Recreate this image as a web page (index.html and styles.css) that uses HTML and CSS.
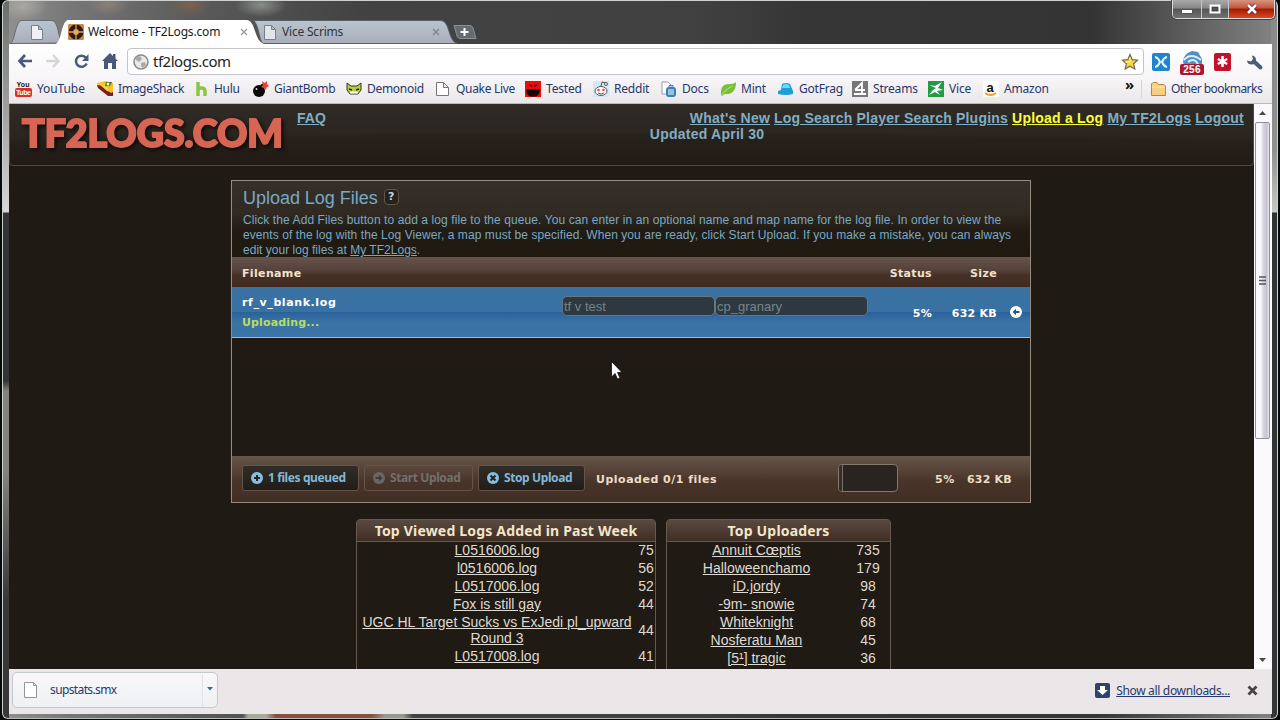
FILE: index.html
```html
<!DOCTYPE html>
<html lang="en">
<head>
<meta charset="utf-8">
<title>Welcome - TF2Logs.com</title>
<link rel="stylesheet" href="styles.css">
</head>
<body>
<div class="window">
  <header class="tabstrip">
    <svg class="tabshapes" width="1280" height="44" viewBox="0 0 1280 44">
      <defs><linearGradient id="tabg" x2="0" y2="1"><stop offset="0" stop-color="#bac4ce"/><stop offset="1" stop-color="#a9aeb9"/></linearGradient></defs>
      <path d="M10 43.500C15 42 15 23 21 20.500H52Q56 21 58 30L61 43Z" fill="url(#tabg)" stroke="#666e78"/>
      <path d="M253 20.500H441C450 21 448 41 457 43.500H263C259 42 259 23 253 20.500Z" fill="url(#tabg)" stroke="#59616b"/>
      <path d="M56 44C62 40 61 22 68 20H247C256 21 254 41 264 44Z" fill="#fff"/>
      <path d="M454 25.500H470Q472 25.500 473 28L476 38.500H460Q458 38.500 457 36Z" fill="#666b70" stroke="#8c9092"/>
      <path d="M464.500 28V36M460.500 32H468.500" stroke="#fff" stroke-width="2"/>
    </svg>
    <div class="tab pinned"><svg width="12" height="15" viewBox="0 0 12 15"><path d="M.5 .5H7.500L11.500 4.500V14.500H.5ZM7.500 .5V4.500H11.500" fill="#eef0f3" stroke="#777f88"/></svg></div>
    <div class="tab active">
      <svg width="16" height="16" viewBox="0 0 16 16"><rect width="16" height="16" rx="1" fill="#c98d49"/><circle cx="8" cy="8" r="5.200" fill="none" stroke="#2d1c14" stroke-width="4.400"/><path d="M8 0V16M0 8H16" stroke="#df9c50" stroke-width="1.300"/><circle cx="8" cy="8" r="2.200" fill="#e9ad63"/></svg>
      <span class="tabtitle t-active">Welcome - TF2Logs.com</span><svg class="x" width="8" height="8"><path d="M1 1L7 7M7 1L1 7" stroke="#999" stroke-width="1.400"/></svg>
    </div>
    <div class="tab vice">
      <svg width="12" height="15" viewBox="0 0 12 15"><path d="M.5 .5H7.500L11.500 4.500V14.500H.5ZM7.500 .5V4.500H11.500" fill="#e2e5e9" stroke="#777f88"/></svg>
      <span class="tabtitle t-vice">Vice Scrims</span><svg class="x" width="8" height="8"><path d="M1 1L7 7M7 1L1 7" stroke="#7e858c" stroke-width="1.400"/></svg>
    </div>
    <div class="controls">
      <span class="wc min"><svg width="12" height="5"><rect x=".5" y=".5" width="11" height="4" fill="#fff" stroke="#555"/></svg></span>
      <span class="wc max"><svg width="12" height="10"><rect x="1.500" y="1.500" width="9" height="7" fill="none" stroke="#fff" stroke-width="2"/><rect x="3.500" y="3.500" width="5" height="3" fill="#555" stroke="#444"/></svg></span>
      <span class="wc close"><svg width="12" height="10" viewBox="0 0 12 10"><path d="M2 1L10 9M10 1L2 9" stroke="#613" stroke-width="4"/><path d="M2 1L10 9M10 1L2 9" stroke="#fff" stroke-width="2.600"/></svg></span>
    </div>
  </header>

  <div class="toolbar">
    <div class="tools">
      <svg width="14" height="14" viewBox="0 0 14 14"><path d="M7 1L1.500 7L7 13M2 7H14" fill="none" stroke="#48587b" stroke-width="2.700"/></svg>
      <svg width="14" height="14" viewBox="0 0 14 14"><path d="M7 1L12.500 7L7 13M12 7H0" fill="none" stroke="#d3d5d9" stroke-width="2.500"/></svg>
      <svg width="15" height="15" viewBox="0 0 15 15"><path d="M12 3.800A5.600 5.600 0 1 0 12.700 9.500" fill="none" stroke="#4c5b77" stroke-width="2.500"/><path d="M14.500 0V7H8Z" fill="#4c5b77"/></svg>
      <svg width="16" height="16" viewBox="0 0 16 16"><path d="M8 0L0 8H2V16H6V10H10V16H14V8H16L13.500 5.500V1H11V3Z" fill="#48587b"/></svg>
    </div>
    <div class="omnibox">
      <svg width="16" height="16" viewBox="0 0 16 16"><circle cx="8" cy="8" r="7" fill="#e9e9e9" stroke="#8c8c8c" stroke-width="1.600"/><path d="M3 3L7 2L9 5L6 8L3 6ZM8 9L12 8L13 11L10 14L8 12Z" fill="#aaa"/></svg>
      <span class="url">tf2logs.com</span>
      <svg class="star" width="18" height="18" viewBox="0 0 18 18"><path d="M9 1.500L11.200 6.700L16.500 7.200L12.600 10.800L13.800 16L9 13.300L4.200 16L5.400 10.800L1.500 7.200L6.800 6.700Z" fill="#f7d447" stroke="#766a3e" stroke-width="1.200"/><path d="M9 4V9H4" stroke="#fff09b" fill="none"/></svg>
    </div>
    <svg class="ext e1" width="18" height="18" viewBox="0 0 18 18"><rect width="18" height="18" rx="2" fill="#2283d0"/><path d="M3 4Q6 4.500 8 9Q6 13.500 3 14M15 4Q12 4.500 10 9Q12 13.500 15 14" fill="none" stroke="#e7f8ff" stroke-width="2"/></svg>
    <span class="ext e2"><svg width="23" height="15" viewBox="0 0 23 15"><path d="M2 11Q2 3 11 0L17 1L21 8V14H3Z" fill="#4f8fc6"/><path d="M3 9Q10 1 20 9M7 11Q13 6 17 13" fill="none" stroke="#dceef9" stroke-width="2"/></svg><b>256</b></span>
    <svg class="ext e3" width="18" height="18" viewBox="0 0 18 18"><rect width="17" height="18" rx="2" fill="#c3102b"/><path d="M8.500 3V14M3.800 6L13.200 11M13.200 6L3.800 11" stroke="#fff" stroke-width="2.500"/></svg>
    <svg class="ext e4" width="17" height="16" viewBox="0 0 17 16"><path d="M6 1.500A4.500 4.500 0 1 1 1 6.500L5 7.500L7 5Z" fill="#4d5b76"/><path d="M8 7.500L14.500 13.500" stroke="#4d5b76" stroke-width="4" stroke-linecap="round"/></svg>
  </div>

  <nav class="bookmarks">
    <span class="bm"><svg width="17" height="16" viewBox="0 0 17 16"><rect y="7" width="17" height="9" rx="2" fill="#d92e2c"/><text x="1.500" y="6" font-size="7" font-weight="bold" textLength="13">You</text><text x="1" y="14" font-size="7" font-weight="bold" fill="#fff" textLength="15">Tube</text></svg><span>YouTube</span></span>
    <span class="bm"><svg width="17" height="16" viewBox="0 0 17 16"><path d="M0 2L9 0L16 2V12L14 15L10 13L1 7Z" fill="#f5c51b"/><path d="M0 4L7 5L14 12L16 11V15H11L1 7Z" fill="#7c1c2c"/><path d="M2 3L8 4L14 11L10 10Z" fill="#f9d92e"/><path d="M9 1L15 1L13 5H8Z" fill="#4e6b26"/><circle cx="11" cy="3" r="1.500" fill="#fff"/></svg><span>ImageShack</span></span>
    <span class="bm"><svg width="15" height="16" viewBox="0 0 15 16"><path d="M3 1V15M3 9Q3 7 6 7Q10 7 10 10V15" fill="none" stroke="#8bc644" stroke-width="3.500"/></svg><span>Hulu</span></span>
    <span class="bm"><svg width="16" height="16" viewBox="0 0 16 16"><circle cx="6" cy="10" r="6" fill="#080808"/><path d="M7 4L11 2L11 7Z" fill="#111"/><path d="M9 0L11.500 2L14 0L14 3L16 5L13.500 6.500L13 9L11 7L8 6L10 4Z" fill="#e84532"/><circle cx="3.500" cy="8" r="1" fill="#ddd"/></svg><span>GiantBomb</span></span>
    <span class="bm"><svg width="16" height="16" viewBox="0 0 16 16"><path d="M1 2L5 5H11L15 2V9L12 13H4L1 9Z" fill="#bacd42" stroke="#34371f"/><path d="M3 8L6 9M13 8L10 9" stroke="#222" stroke-width="1.500"/><path d="M4 11.500H12" stroke="#fff" stroke-width="2"/></svg><span>Demonoid</span></span>
    <span class="bm quake"><svg width="13" height="14" viewBox="0 0 13 14"><path d="M.5 .5H7.500L12.500 5.500V13.500H.5ZM7.500 .5V5.500H12.500" fill="#fff" stroke="#777"/></svg><span>Quake Live</span></span>
    <span class="bm"><svg width="16" height="16" viewBox="0 0 16 16"><rect width="16" height="16" fill="#ee0c0b"/><path d="M2 9H14Q14 15 8 15Q2 15 2 9M4 4L7 5M12 4L9 5" fill="#150706" stroke="#150706" stroke-width="1.500"/></svg><span>Tested</span></span>
    <span class="bm"><svg width="16" height="16" viewBox="0 0 16 16"><rect width="16" height="16" fill="#d2e7f7"/><ellipse cx="8" cy="10" rx="6" ry="4.500" fill="#fff" stroke="#555"/><circle cx="5.500" cy="9" r="1.300" fill="#f44"/><circle cx="10.500" cy="9" r="1.300" fill="#f44"/><path d="M5 12Q8 14 11 12M8 5L9 1L13 2" fill="none" stroke="#555"/><circle cx="13" cy="3" r="1.500" fill="#fff" stroke="#555"/></svg><span>Reddit</span></span>
    <span class="bm"><svg width="16" height="16" viewBox="0 0 16 16"><path d="M1 1H7L10 4V13H1Z" fill="#fff" stroke="#99b"/><rect x="5" y="6" width="10" height="10" rx="3" fill="#3581b4"/><path d="M8 6V4.500H12V6" fill="none" stroke="#3581b4"/><path d="M7 9H13M7 11H13M7 13H13" stroke="#fff"/></svg><span>Docs</span></span>
    <span class="bm"><svg width="16" height="16" viewBox="0 0 16 16"><path d="M1 14Q0 3 9 3Q14 3 16 1Q16 14 5 13L2 15Z" fill="#78bf37"/><path d="M2 14Q7 7 13 5" fill="none" stroke="#a2d86b" stroke-width="1.300"/></svg><span>Mint</span></span>
    <span class="bm"><svg width="16" height="14" viewBox="0 0 16 14"><path d="M0 12V9L3 8L4 2Q8 0 12 2L15 9V12Q8 14 0 12Z" fill="#1f9ed8"/><path d="M5 3Q8 1 11 3L12 6H4Z" fill="#69d9fa"/></svg><span>GotFrag</span></span>
    <span class="bm"><svg width="16" height="16" viewBox="0 0 16 16"><rect width="16" height="16" fill="#777"/><path d="M3 9L10 2V12M3 9H13M2 13H14" fill="none" stroke="#fff" stroke-width="1.800"/></svg><span>Streams</span></span>
    <span class="bm"><svg width="16" height="16" viewBox="0 0 16 16"><rect width="16" height="16" fill="#239b44"/><path d="M1 4L7 5L14 1L10 7L15 9L9 10L12 14L7 11L1 14L5 9L8 7Z" fill="#fff"/></svg><span>Vice</span></span>
    <span class="bm"><svg width="16" height="16" viewBox="0 0 16 16"><rect width="16" height="16" fill="#fffdf8"/><text x="3.500" y="11" font-size="13" font-weight="bold">a</text><path d="M2 12Q8 16 13 12" fill="none" stroke="#eba02b" stroke-width="1.800"/></svg><span>Amazon</span></span>
    <b class="more">»</b>
    <span class="bm other"><svg width="15" height="14" viewBox="0 0 15 14"><path d="M.5 13.500V2L2 .5H6L7.500 2.500H13L14.500 4V13.500Z" fill="#f8cf80" stroke="#bd8737"/><path d="M1 5H14" stroke="#ffe9ac"/></svg><span>Other bookmarks</span></span>
  </nav>

  <div class="viewport">
    <main class="page">
      <header class="sitehead">
        <svg class="logo" width="276" height="48" viewBox="0 0 276 48"><text x="7" y="36" textLength="261" lengthAdjust="spacingAndGlyphs">TF2LOGS.COM</text></svg>
        <a class="faq">FAQ</a>
        <div class="headtext">
          <div class="links"><a>What's New</a><a>Log Search</a><a>Player Search</a><a>Plugins</a><a class="current">Upload a Log</a><a>My TF2Logs</a><a>Logout</a></div>
          <div class="updated">Updated April 30</div>
        </div>
      </header>

      <section class="uploader">
        <div class="intro">
          <div class="title"><h1>Upload Log Files</h1><span class="help">?</span></div>
          <p><span class="l1">Click the Add Files button to add a log file to the queue. You can enter in an optional name and map name for the log file. In order to view the</span><br><span class="l2">events of the log with the Log Viewer, a map must be specified. When you are ready, click Start Upload. If you make a mistake, you can always</span><br><span class="l3">edit your log files at <a>My TF2Logs</a>.</span></p>
        </div>
        <div class="row colhead"><span>Filename</span><span></span><span class="num">Status</span><span class="num">Size</span></div>
        <div class="row file">
          <div class="fname"><div>rf_v_blank.log</div><div class="state">Uploading...</div></div>
          <div class="fields"><span>tf v test</span><span>cp_granary</span></div>
          <span class="num">5%</span><span class="num">632 KB</span>
          <svg width="12" height="12" viewBox="0 0 12 12"><circle cx="6" cy="6" r="6" fill="#fff"/><path d="M2.500 6L6 2.800V5H9.500V7H6V9.200Z" fill="#235889"/></svg>
        </div>
        <div class="blank"></div>
        <div class="foot">
          <span class="btn b1"><svg width="12" height="12" viewBox="0 0 12 12"><circle cx="6" cy="6" r="6" fill="#88bddd"/><path d="M6 3V9M3 6H9" stroke="#26231e" stroke-width="2"/></svg>1 files queued</span>
          <span class="btn b2"><svg width="12" height="12" viewBox="0 0 12 12"><circle cx="6" cy="6" r="6" fill="#696765"/><path d="M9.500 6L6 2.800V5H2.500V7H6V9.200Z" fill="#47372e"/></svg>Start Upload</span>
          <span class="btn b3"><svg width="12" height="12" viewBox="0 0 12 12"><circle cx="6" cy="6" r="6" fill="#88bddd"/><path d="M3.500 3.500L8.500 8.500M8.500 3.500L3.500 8.500" stroke="#26231e" stroke-width="2"/></svg>Stop Upload</span>
          <span class="count">Uploaded 0/1 files</span>
          <span class="progress"><i></i></span>
          <span class="pct">5%</span><span class="size">632 KB</span>
        </div>
      </section>

      <div class="lists">
        <section class="list viewed">
          <h2>Top Viewed Logs Added in Past Week</h2>
          <div class="item"><a>L0516006.log</a><span>75</span></div>
          <div class="item"><a>l0516006.log</a><span>56</span></div>
          <div class="item"><a>L0517006.log</a><span>52</span></div>
          <div class="item"><a>Fox is still gay</a><span>44</span></div>
          <div class="item"><a>UGC HL Target Sucks vs ExJedi pl_upward<br>Round 3</a><span>44</span></div>
          <div class="item"><a>L0517008.log</a><span>41</span></div>
        </section>
        <section class="list top">
          <h2>Top Uploaders</h2>
          <div class="item"><a>Annuit Cœptis</a><span>735</span></div>
          <div class="item"><a>Halloweenchamo</a><span>179</span></div>
          <div class="item"><a>iD.jordy</a><span>98</span></div>
          <div class="item"><a>-9m- snowie</a><span>74</span></div>
          <div class="item"><a>Whiteknight</a><span>68</span></div>
          <div class="item"><a>Nosferatu Man</a><span>45</span></div>
          <div class="item"><a>[5¹] tragic</a><span>36</span></div>
        </section>
      </div>
    </main>
    <div class="scrollbar">
      <svg width="7" height="4"><path d="M0 4L3.500 0L7 4Z" fill="#4a4a4a"/></svg>
      <div class="thumb"><svg width="7" height="9"><path d="M0 1H7M0 4.500H7M0 8H7" stroke="#55555e" stroke-width="1.500"/></svg></div>
      <svg class="down" width="7" height="4"><path d="M0 0L3.500 4L7 0Z" fill="#4a4a4a"/></svg>
    </div>
  </div>

  <footer class="shelf">
    <div class="download"><svg width="13" height="16" viewBox="0 0 13 16"><path d="M.5 .5H9.500L12.500 3.500V15.500H.5ZM9.500 .5V3.500H12.500" fill="#fff" stroke="#92979b"/></svg><span>supstats.smx</span><i><svg width="6" height="4"><path d="M0 0H6L3 3.500Z" fill="#45658f"/></svg></i></div>
    <svg class="dlicon" width="15" height="15" viewBox="0 0 15 15"><rect width="15" height="15" rx="2" fill="#2c426f"/><path d="M5 3H10V7H13L7.500 12L2 7H5Z" fill="#fff"/></svg>
    <a>Show all downloads...</a>
    <svg class="shelfx" width="11" height="11" viewBox="0 0 11 11"><path d="M1.500 1.500L9.500 9.500M9.500 1.500L1.500 9.500" stroke="#444" stroke-width="2.800"/></svg>
  </footer>
</div>
<svg class="cursor" width="12" height="19" viewBox="0 0 12 19"><path d="M.5 .5V16L4 12.500L6.500 18L9 17L6.500 11.500H11Z" fill="#fff" stroke="#111" stroke-width=".8"/></svg>
</body>
</html>
```
FILE: styles.css
```css
* { box-sizing: border-box; }
svg { display: block; flex: none; overflow: visible; }
body { margin: 0; width: 1280px; height: 720px; overflow: hidden; background: #080909; font-family: "Liberation Sans", Arial, sans-serif; }
.window {
  width: 1276px; height: 719px; margin-left: 2px; padding: 0 5px 5px 6px;
  border: 1px solid #cdd2d1; border-bottom-color: #bbb; border-radius: 6px;
  display: flex; flex-direction: column;
  background:
    linear-gradient(90deg, transparent 240px, #aaa99e 245px 263px, #884f3d 273px 368px, #99998e 382px 400px, transparent 410px) bottom/100% 6px no-repeat,
    linear-gradient(#6b6d6c 0, #aaa 130px, #d7d7d7 211px, #323438 212px 380px, #85837d 390px 470px, #383838 600px) left 0 top 0/6px 100% no-repeat,
    linear-gradient(#898989 0, #8e918f 150px, #c6c8c5 211px, #303434 212px, #343636 100%) right 0 top 0/6px 100% no-repeat,
    radial-gradient(ellipse at 20px 5px, #aaa8a3 0, transparent 25px),
    radial-gradient(ellipse 22px 12px at 105px 3px, #898178 0, transparent),
    radial-gradient(ellipse 22px 12px at 187px 3px, #7a614d 0, transparent),
    radial-gradient(ellipse 26px 12px at 258px 4px, #8a8d89 0, transparent),
    linear-gradient(90deg, #929291 0, #777 65px, #595959 200px, #424242 360px, #414141 690px, #363636 800px, #343434 1090px, #4e4e4e 1150px, #848484 1276px);
}
.tabstrip { height: 43px; flex: none; display: flex; align-items: flex-start; padding-top: 19px; margin: 0 0 0 -9px; color: #30343a; font: 12px "Noto Sans", sans-serif; }
.tabshapes { position: absolute; left: 0; top: 0; }
.tab { position: relative; display: flex; align-items: center; height: 24px; }
.pinned { width: 37px; margin-left: 31px; }
.active { width: 196px; }
.tabtitle { margin: -2px 0 0 4px; white-space: nowrap; }
.t-active { width: 152px; color: #181818; letter-spacing: -.17px; }
.vice { width: 180px; }
.t-vice { margin-left: 6px; width: 150px; letter-spacing: -.2px; }
.controls { position: absolute; left: 1172px; top: 0; display: flex; height: 19px; width: 103px; border: 1px solid #ddd; border-top: 0; border-radius: 0 0 5px 5px; overflow: hidden; box-shadow: 0 0 0 1px #444; }
.wc { display: flex; align-items: center; justify-content: center; background: linear-gradient(#aaa, #858585 45%, #555 50%, #727272); border-right: 1px solid #c8c8c8; }
.min { width: 29px; padding-top: 5px; } .max { width: 27px; } .close { flex: 1; border: 0; background: linear-gradient(#d9947f, #bf553a 45%, #a61800 50%, #d74925); }

.toolbar { height: 35px; flex: none; display: flex; align-items: center; background: linear-gradient(#fff, #f7f5f7); padding-left: 9px; }
.tools { width: 109px; display: grid; grid-template-columns: 28px 28px 28px 16px; align-items: center; }
.tools svg { margin-top: -1px; }
.omnibox { width: 1017px; height: 27px; border: 1px solid #c5c5c9; border-radius: 4px; background: #fff; display: flex; align-items: center; padding: 0 4px 0 5px; font: 15px "Noto Sans", sans-serif; color: #222; }
.url { margin: -2px 0 0 4px; letter-spacing: -.48px; } .star { margin-left: auto; }
.e1 { margin-left: 8px; } .e2 { position: relative; width: 25px; height: 22px; margin-left: 10px; }
.e2 svg { margin-left: 1px; }
.e2 b { position: absolute; left: 0; top: 13px; width: 24px; height: 11px; border-radius: 2px; background: #ad1630; color: #fff; font: bold 10px/11px "Liberation Sans", sans-serif; text-align: center; letter-spacing: .3px; }
.e3 { margin-left: 9px; } .e4 { margin-left: 14px; }

.bookmarks { height: 25px; flex: none; display: grid; grid-template-columns: 82px 98px 58px 93px 90px 89px 68px 68px 59px 58px 74px 76px 55px 142px 16px 122px; align-items: start; padding: 1px 0 0 6px; background: linear-gradient(#f7f5f7, #ebe7e9); border-bottom: 1px solid #bbb8b7; font: 12px/18px "Noto Sans", sans-serif; color: #26376b; }
.bm { display: flex; align-items: center; gap: 4px; height: 18px; white-space: nowrap; letter-spacing: -.3px; }
.bm:first-child, .bm:nth-child(n+4):not(.quake) { gap: 5px; }
.quake { gap: 7px; }
.bm:nth-child(n+7) { letter-spacing: -.2px; }
.bm:first-child { letter-spacing: -.1px; }
.bm svg text { font-family: "Liberation Sans", sans-serif; letter-spacing: 0; fill: #111; }
.bm svg text[fill] { fill: #fff; }
.more { color: #111; font: bold 15px/8px "Noto Sans", sans-serif; }
.bm.other { padding-left: 9px; border-left: 1px solid #d6d6d8; letter-spacing: -.55px; }

.viewport { height: 565px; flex: none; display: flex; }
.page { width: 1245px; height: 565px; overflow: hidden; background: #1f1a14; }
.sitehead { height: 62px; display: flex; padding: 0 9px 0 5px; border: solid #504840; border-width: 0 1px 1px; border-radius: 0 0 4px 4px; background: radial-gradient(ellipse 1100px 32px at 50% 62px, #231c1680 0 90%, transparent 105%), linear-gradient(#302b26, #2a241e 60%, #211a14); color: #81aec4; font-weight: bold; font-size: 14px; line-height: 16px; }
.logo { margin-top: 7px; filter: drop-shadow(2px 2px 2px #0c0908); }
.logo text { font: 900 37px "Lato Black", Lato, sans-serif; fill: #d66554; stroke: #d66554; stroke-width: 2px; stroke-linejoin: miter; }
a { text-decoration: underline; text-underline-offset: 1px; }
.faq { margin: 6px 0 0 6px; height: 16px; }
.headtext { margin-left: auto; padding-top: 6px; }
.links { display: flex; gap: 4px; letter-spacing: .22px; white-space: nowrap; margin-left: 40px; }
.updated { letter-spacing: .24px; }
.current { color: #fbff36; }

.uploader { width: 800px; height: 323px; margin: 14px 0 0 222px; border: 1px solid #978b7e; }
.intro { height: 76px; padding: 6px 11px 0; background: linear-gradient(#352f29, #302a23 42%, #211b13 64%, #1f1910); color: #78a9c5; }
.title { display: flex; align-items: center; height: 21px; }
h1 { font-size: 18px; font-weight: normal; margin: 1px 6px 0 0; letter-spacing: -.03px; }
.help { width: 15px; height: 16px; border: 1px solid #625547; border-radius: 4px; background: #25221e; color: #b6dbef; font: bold 11px/14px "DejaVu Sans", sans-serif; text-align: center; margin-top: -1px; }
p { margin: 5px 0 0; font-size: 12px; line-height: 15px; white-space: nowrap; }
.l1 { letter-spacing: .086px; } .l2 { letter-spacing: .072px; } .l3 { letter-spacing: .02px; }
.row { display: grid; grid-template-columns: 320px 306px 64px 65px 1fr; padding-left: 10px; font: bold 11px "DejaVu Sans", Verdana, sans-serif; color: #f3e2cc; letter-spacing: .35px; }
.num { text-align: right; }
.colhead { height: 30px; align-items: center; padding-top: 2px; background: linear-gradient(#66544a, #54413a 45%, #463026 60%, #412c21); }
.file { height: 51px; align-items: center; color: #fff; border-bottom: 1px solid #9cc1d5; background: linear-gradient(#3a71a3 0 49%, #28629b 50%, #3b72a5 70%, #3d74a5); letter-spacing: .25px; padding-top: 2px; }
.fname div { height: 20px; line-height: 20px; letter-spacing: .6px; } .fname .state { color: #b9db66; letter-spacing: .15px; }
.fields { display: flex; height: 20px; margin-top: -14px; font: 13px/18px "Liberation Sans", sans-serif; color: #77858b; letter-spacing: 0; }
.fields span { width: 153px; border: 1px solid #68777d; border-radius: 5px; background: #2d3840; padding: 1px 1px; }
.file svg { margin-left: 13px; margin-top: -3px; }
.blank { height: 118px; }
.foot { height: 46px; display: flex; align-items: center; padding-left: 10px; background: linear-gradient(#66564b, #574338 30%, #49342a 55%, #432e25); font: bold 11px "DejaVu Sans", Verdana, sans-serif; color: #efddc5; white-space: nowrap; letter-spacing: .5px; }
.btn { height: 26px; margin: -3px 5px 0 0; padding: 0 8px; display: flex; align-items: center; gap: 5px; border: 1px solid #655448; border-radius: 3px; font: bold 12px "Noto Sans", sans-serif; background: linear-gradient(#302d29, #211c18); color: #84b8d5; letter-spacing: -.4px; }
.b1 { width: 117px; } .b2 { width: 109px; background: none; color: #73706c; } .b3 { width: 107px; }
.count { width: 242px; margin-left: 6px; }
.progress { width: 60px; height: 28px; margin-top: -2px; border: 1px solid #84796d; border-radius: 4px; background: #29241f; overflow: hidden; }
.progress i { display: block; width: 4px; height: 26px; background: #322e29; border-right: 1px solid #776e65; }
.pct { width: 32px; margin-left: 37px; } .size { letter-spacing: .2px; }

.lists { display: flex; gap: 10px; margin: 16px 0 0 347px; }
.list { width: 300px; height: 170px; border: 1px solid #655950; border-radius: 4px 4px 0 0; color: #dfdad1; font-size: 14px; line-height: 16px; text-align: center; }
.top { width: 225px; }
h2 { height: 22px; margin: 0; border-bottom: 1px solid #67594f; background: linear-gradient(#594a41, #402d23); color: #f3e6ca; font: bold 14px/22px "Noto Sans", sans-serif; letter-spacing: .19px; }
.item { display: grid; grid-template-columns: 280px 18px; align-items: center; margin-bottom: 2px; white-space: nowrap; }
.top .item { grid-template-columns: 179px 44px; }

.scrollbar { width: 18px; background: #fbf9fc; display: flex; flex-direction: column; align-items: center; padding: 7px 3px 7px 1px; }
.thumb { width: 15px; height: 317px; margin-top: 7px; border: 1px solid #8f8f99; border-radius: 2px; background: linear-gradient(90deg, #faf8fc 35%, #d3d1dc 60%, #c5c4ce 85%, #eee); display: grid; place-items: center; }
.down { margin-top: auto; }
.shelf { height: 45px; flex: none; display: flex; align-items: center; padding: 0 14px 3px 3px; background: #ebe6e8; color: #263970; font: 12px "Noto Sans", sans-serif; }
.download { width: 206px; height: 36px; display: flex; align-items: center; padding-left: 11px; border: 1px solid #c3c9cf; border-radius: 5px; background: linear-gradient(#faf7f8, #eef1f4); }
.download span { margin: -1px 0 0 13px; letter-spacing: -.62px; }
.download i { width: 15px; height: 33px; border-left: 1px solid #dfe3e8; margin-left: auto; padding: 13px 4px; }
.dlicon { margin-left: auto; }
.shelf a { margin: 0 17px 0 6px; letter-spacing: -.33px; }
.cursor { position: absolute; left: 611px; top: 361px; }
```
